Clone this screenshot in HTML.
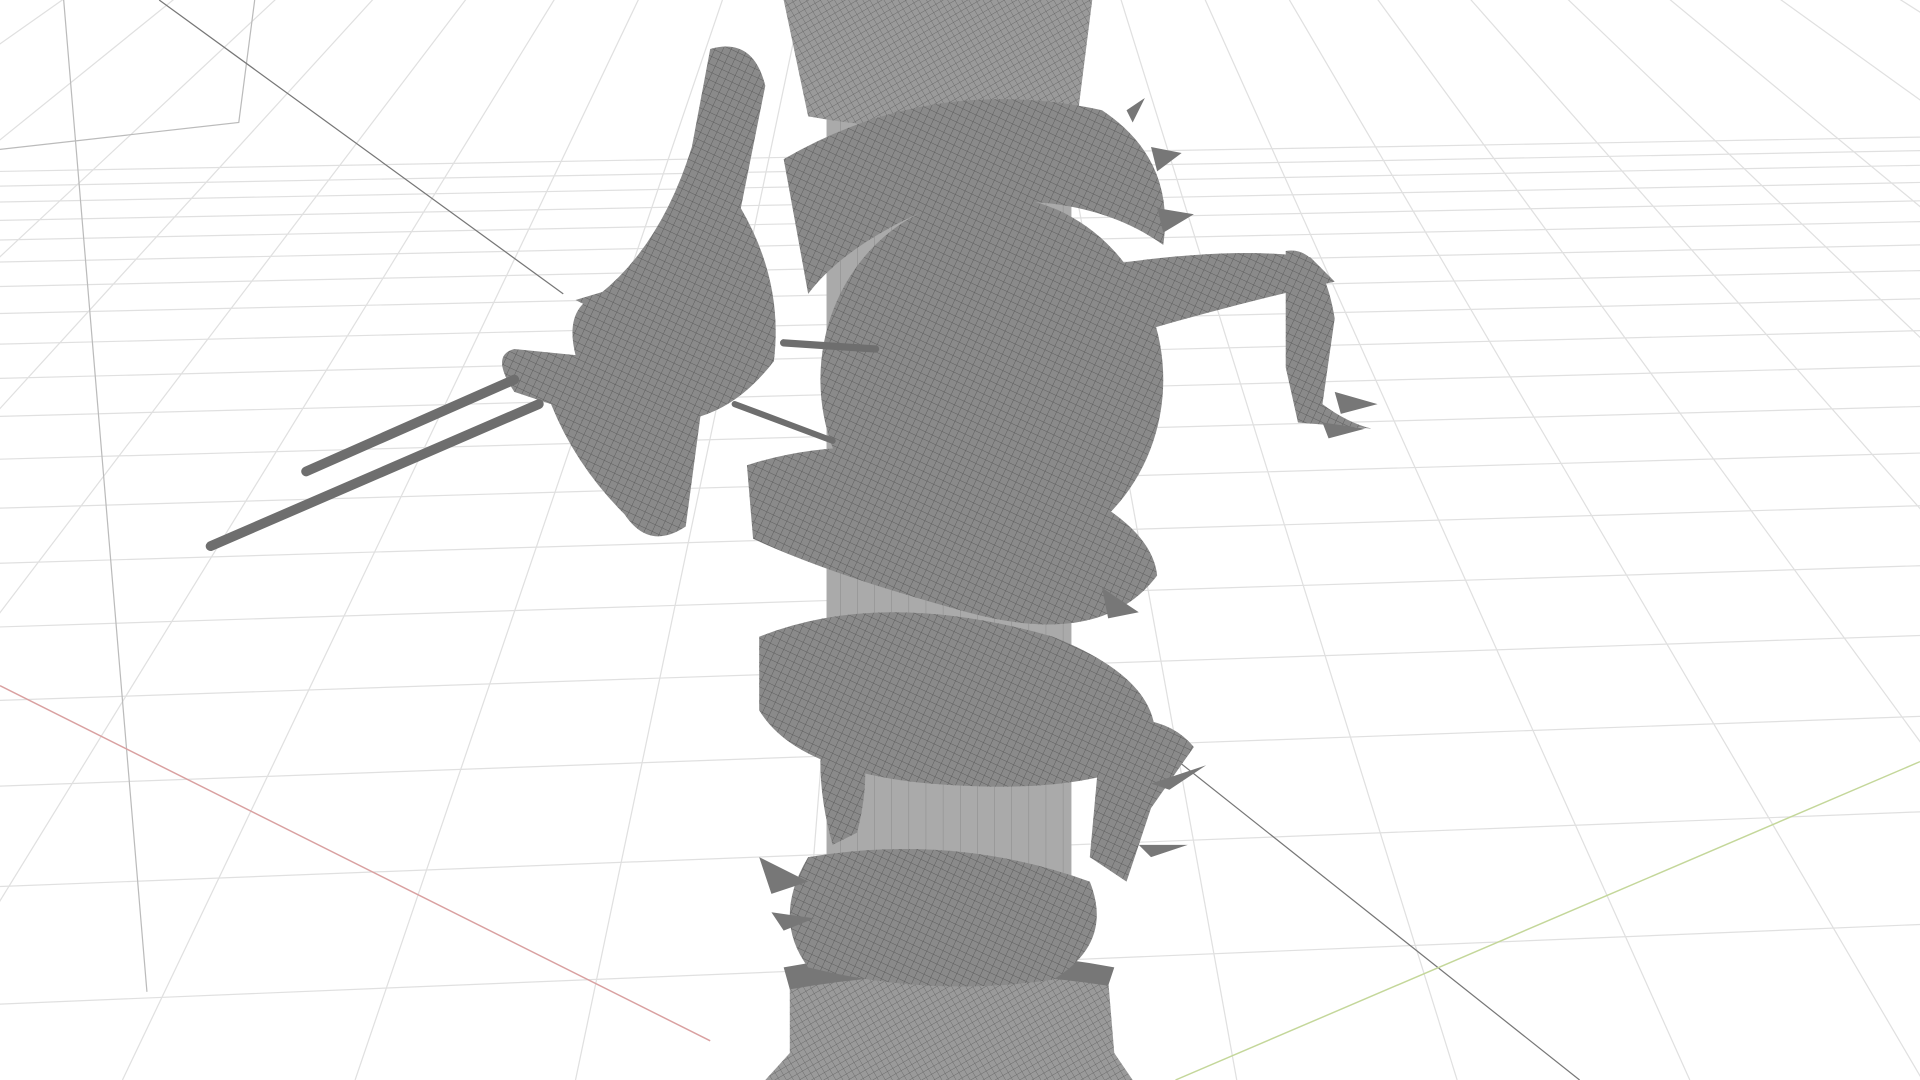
<!DOCTYPE html>
<html><head><meta charset="utf-8"><style>
html,body{margin:0;padding:0;background:#fff;width:1920px;height:1080px;overflow:hidden}
svg{display:block;position:absolute;left:0;top:0}
</style></head><body>
<svg width="1920" height="1080" viewBox="0 0 1568 882" preserveAspectRatio="none" xmlns="http://www.w3.org/2000/svg">
<defs>
<pattern id="mesh" width="6" height="6" patternUnits="userSpaceOnUse" patternTransform="rotate(25)">
<rect width="6" height="6" fill="#8a8a8a"/>
<path d="M0 0H6M0 0V6" stroke="#5e5e5e" stroke-width="0.8"/>
</pattern>
<pattern id="mesh2" width="5" height="5" patternUnits="userSpaceOnUse" patternTransform="rotate(-30)">
<rect width="5" height="5" fill="#9a9a9a"/>
<path d="M0 0H5M0 0V5" stroke="#6a6a6a" stroke-width="0.7"/>
</pattern>
<pattern id="col" width="14" height="10" patternUnits="userSpaceOnUse">
<rect width="14" height="10" fill="#aaaaaa"/>
<path d="M0 0V10" stroke="#8a8a8a" stroke-width="0.8"/>
</pattern>
</defs>
<rect width="1568" height="882" fill="#ffffff"/>
<g stroke="#e0e0e0" stroke-width="1" fill="none">
<path d="M0 140 L1568 112"/><path d="M0 152 L1568 123"/><path d="M0 165 L1568 135"/><path d="M0 180 L1568 149"/>
<path d="M0 196 L1568 164"/><path d="M0 214 L1568 181"/><path d="M0 234 L1568 200"/><path d="M0 256 L1568 221"/>
<path d="M0 281 L1568 244"/><path d="M0 309 L1568 270"/><path d="M0 340 L1568 299"/><path d="M0 375 L1568 332"/>
<path d="M0 415 L1568 370"/><path d="M0 460 L1568 413"/><path d="M0 512 L1568 462"/><path d="M0 572 L1568 519"/>
<path d="M0 642 L1568 585"/><path d="M0 724 L1568 663"/><path d="M0 820 L1568 755"/>
<path d="M760 -500 L-1200 882"/><path d="M760 -500 L-950 882"/><path d="M760 -500 L-720 882"/>
<path d="M760 -500 L-500 882"/><path d="M760 -500 L-290 882"/><path d="M760 -500 L-90 882"/>
<path d="M760 -500 L100 882"/><path d="M760 -500 L290 882"/><path d="M760 -500 L470 882"/>
<path d="M760 -500 L650 882"/><path d="M760 -500 L830 882"/><path d="M760 -500 L1010 882"/>
<path d="M760 -500 L1190 882"/><path d="M760 -500 L1380 882"/><path d="M760 -500 L1570 882"/>
<path d="M760 -500 L1770 882"/><path d="M760 -500 L1980 882"/><path d="M760 -500 L2200 882"/>
<path d="M760 -500 L2430 882"/><path d="M760 -500 L2680 882"/><path d="M760 -500 L2950 882"/>
</g>
<g stroke="#bbbbbb" stroke-width="1" fill="none">
<path d="M0 122 L195 100 L208 0"/><path d="M52 0 L120 810"/>
</g>
<path d="M130 0 L460 240" stroke="#777" stroke-width="1"/>
<path d="M960 620 L1290 882" stroke="#777" stroke-width="1"/>
<path d="M0 560 L580 850" stroke="#d9a0a0" stroke-width="1.2"/>
<path d="M960 882 L1568 622" stroke="#c4d79a" stroke-width="1.2"/>
<!-- column -->
<rect x="675" y="80" width="200" height="720" fill="url(#col)"/>
<path d="M640 0 H892 L880 95 Q770 115 660 95 Z" fill="url(#mesh2)"/>
<path d="M645 800 Q775 770 905 800 L910 860 L925 882 H625 L645 860 Z" fill="url(#mesh2)"/>
<path d="M640 790 Q775 765 910 790 L905 805 Q775 785 645 808 Z" fill="#777"/>
<!-- dragon body -->
<g fill="url(#mesh)">
<ellipse cx="810" cy="310" rx="140" ry="150"/>
<path d="M640 130 Q760 60 900 90 Q960 130 950 200 Q880 150 760 170 Q690 200 660 240 Z"/>
<path d="M880 220 Q1000 200 1070 210 L1090 230 Q1000 250 900 280 Z"/>
<path d="M1050 205 Q1080 200 1090 260 L1080 330 Q1100 345 1120 350 L1060 345 L1050 300 Z"/>
<path d="M610 380 Q700 350 830 380 Q940 420 945 470 Q900 530 790 500 Q680 470 615 440 Z"/>
<path d="M620 520 Q720 480 860 520 Q960 560 940 620 Q880 650 760 640 Q650 630 620 580 Z"/>
<path d="M900 590 Q950 580 975 610 L940 660 L920 720 L890 700 Z"/>
<path d="M660 700 Q780 680 890 720 Q910 770 860 800 Q760 815 660 790 Q630 750 660 700 Z"/>
<path d="M680 560 Q720 600 700 680 L680 690 Q660 620 680 560 Z"/>
<!-- head -->
<path d="M580 40 Q615 30 625 70 L605 170 Q640 230 632 295 Q605 330 572 340 L560 430 Q530 450 510 420 Q470 380 450 330 L420 320 Q400 290 420 285 L470 290 Q460 250 490 240 Q540 200 565 120 Z"/>
<path d="M470 245 L520 230 L500 260 Z"/>
</g>
<g stroke="#6e6e6e" stroke-linecap="round" fill="none">
<path d="M420 310 L250 385" stroke-width="8"/>
<path d="M440 330 L172 446" stroke-width="8"/>
<path d="M640 280 L715 285" stroke-width="6"/>
<path d="M600 330 L680 360" stroke-width="5"/>
</g>
<g fill="#777">
<path d="M920 90 L935 80 L925 100 Z M940 120 L965 125 L945 140 Z M945 170 L975 175 L950 190 Z"/>
<path d="M1090 320 L1125 330 L1095 338 Z M1080 345 L1115 350 L1085 358 Z"/>
<path d="M940 640 L985 625 L955 645 Z M930 690 L970 690 L940 700 Z"/>
<path d="M620 700 L660 720 L630 730 Z M630 745 L665 750 L640 760 Z M900 480 L930 500 L905 505 Z"/>
</g>
</svg>
</body></html>
